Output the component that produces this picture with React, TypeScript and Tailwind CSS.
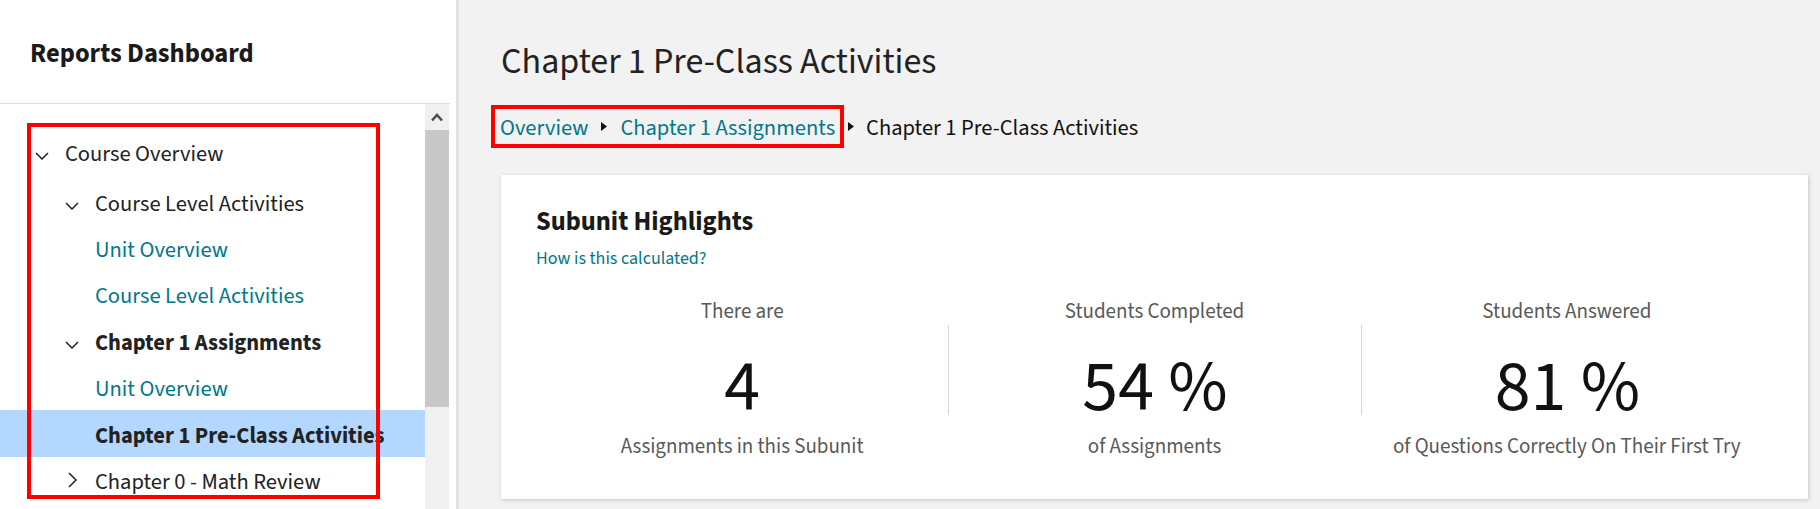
type TreeRow = {
  label: string;
  level: 1 | 2 | 3;
  kind: 'open' | 'closed' | 'leaf';
  bold?: boolean;
  link?: boolean;
  active?: boolean;
};

const tree: TreeRow[] = [
  { label: 'Course Overview', level: 1, kind: 'open' },
  { label: 'Course Level Activities', level: 2, kind: 'open' },
  { label: 'Unit Overview', level: 3, kind: 'leaf', link: true },
  { label: 'Course Level Activities', level: 3, kind: 'leaf', link: true },
  { label: 'Chapter 1 Assignments', level: 2, kind: 'open', bold: true },
  { label: 'Unit Overview', level: 3, kind: 'leaf', link: true },
  { label: 'Chapter 1 Pre-Class Activities', level: 3, kind: 'leaf', bold: true, active: true },
  { label: 'Chapter 0 - Math Review', level: 2, kind: 'closed' },
];

const stats = [
  { top: 'There are', value: '4', bottom: 'Assignments in this Subunit' },
  { top: 'Students Completed', value: '54 %', bottom: 'of Assignments' },
  { top: 'Students Answered', value: '81 %', bottom: 'of Questions Correctly On Their First Try' },
];

function Chevron({ open }: { open: boolean }) {
  return open ? (
    <svg width="14" height="16" viewBox="0 0 14 16" fill="none">
      <path d="M1 9 L7 15 L13 9" stroke="#222" strokeWidth="1.5" />
    </svg>
  ) : (
    <svg width="14" height="16" viewBox="0 0 14 16" fill="none">
      <path d="M4 1 L11 8 L4 15" stroke="#222" strokeWidth="1.5" />
    </svg>
  );
}

function Caret({ className }: { className: string }) {
  return (
    <svg width="6" height="9" viewBox="0 0 6 9" className={'shrink-0 ' + className}>
      <path d="M0 0 L6 4.5 L0 9 Z" fill="#111" />
    </svg>
  );
}

function Sidebar() {
  return (
    <aside className="flex h-full w-[459px] shrink-0 flex-col border-r-[3px] border-[#e3e3e3] bg-white pr-[6px]">
      <div className="flex h-[104px] shrink-0 items-center border-b border-[#dcdcdc] pl-[30px] pt-[4px]">
        <h2 className="text-[26.5px] font-bold leading-[34px] text-[#1a1a1a]">Reports Dashboard</h2>
      </div>
      <div className="flex min-h-0 flex-1">
        <div className="relative min-w-0 flex-1 overflow-hidden pt-[25px]">
          <ul>
            {tree.map((row, i) => (
              <li
                key={i}
                className={[
                  'flex h-[46.4px] items-center pt-[4px] text-[22.5px] leading-[30px]',
                  i === 1 ? 'mt-[3px]' : '',
                  row.level === 1 ? 'pl-[35px]' : row.level === 2 ? 'pl-[65px]' : 'pl-[95px]',
                  row.active ? 'bg-[#b3d7ff]' : '',
                ].join(' ')}
              >
                {row.kind !== 'leaf' && (
                  <span className="-mt-[4px] flex w-[30px] shrink-0 items-center">
                    <Chevron open={row.kind === 'open'} />
                  </span>
                )}
                <span
                  className={[
                    'whitespace-nowrap',
                    row.bold ? 'font-bold' : '',
                    row.link ? 'text-[#00788a]' : 'text-[#222]',
                  ].join(' ')}
                >
                  {row.label}
                </span>
              </li>
            ))}
          </ul>
          <div className="pointer-events-none absolute left-[27px] top-[19px] h-[376px] w-[353px] border-4 border-[#ff0000]" />
        </div>
        <div className="mr-[1px] flex w-[24px] shrink-0 flex-col bg-[#f0f0f0]">
          <div className="flex h-[26px] items-center justify-center">
            <svg width="12" height="9" viewBox="0 0 12 9" fill="none">
              <path d="M1 7.5 L6 2 L11 7.5" stroke="#505050" strokeWidth="2.6" />
            </svg>
          </div>
          <div className="h-[277px] bg-[#c8c8c8]" />
        </div>
      </div>
    </aside>
  );
}

function Highlights() {
  return (
    <section className="h-[324px] w-[1307px] bg-white px-[35px] pt-[30px] shadow-[1px_1px_4px_rgba(0,0,0,0.18)]">
      <h3 className="text-[26.4px] font-bold leading-[34px] text-[#1a1a1a]">Subunit Highlights</h3>
      <a className="mt-[7px] block text-[18px] leading-[26px] text-[#00788a]">How is this calculated?</a>
      <div className="mt-[26px] grid grid-cols-3">
        {stats.map((s, i) => (
          <div key={s.top} className="flex flex-col items-center text-center">
            <div className="mb-[1px] text-[21px] leading-[26px] text-[#595959]">{s.top}</div>
            <div
              className={[
                'flex h-[90px] w-full justify-center pt-[35px] text-[72px] leading-[55px] text-[#111]',
                i > 0 ? 'border-l border-[#d6d6d6]' : '',
              ].join(' ')}
            >
              {s.value}
            </div>
            <div className="mt-[18px] text-[21px] leading-[26px] text-[#595959]">{s.bottom}</div>
          </div>
        ))}
      </div>
    </section>
  );
}

export default function App() {
  return (
    <div className="flex h-[509px] w-full overflow-hidden bg-[#f2f2f2] font-['Source_Sans_3','Source_Sans_Pro','Noto_Sans',sans-serif]">
      <Sidebar />
      <main className="min-w-0 flex-1 pl-[42px] pr-[12px] pt-[40px]">
        <h1 className="text-[36px] leading-[44px] text-[#222]">Chapter 1 Pre-Class Activities</h1>
        <nav className="mt-[21px] flex h-[43px] items-center text-[22.5px] leading-[30px]">
          <span className="-ml-[10px] flex h-[43px] items-center border-4 border-[#ff0000] px-[5px] pt-[3px]">
            <a className="text-[#00788a]">Overview</a>
            <Caret className="mx-[13px] -mt-[3px]" />
            <a className="text-[#00788a]">Chapter 1 Assignments</a>
          </span>
          <Caret className="ml-[4px] mr-[12px]" />
          <span className="pt-[3px] text-[#111]">Chapter 1 Pre-Class Activities</span>
        </nav>
        <div className="mt-[27px]">
          <Highlights />
        </div>
      </main>
    </div>
  );
}
